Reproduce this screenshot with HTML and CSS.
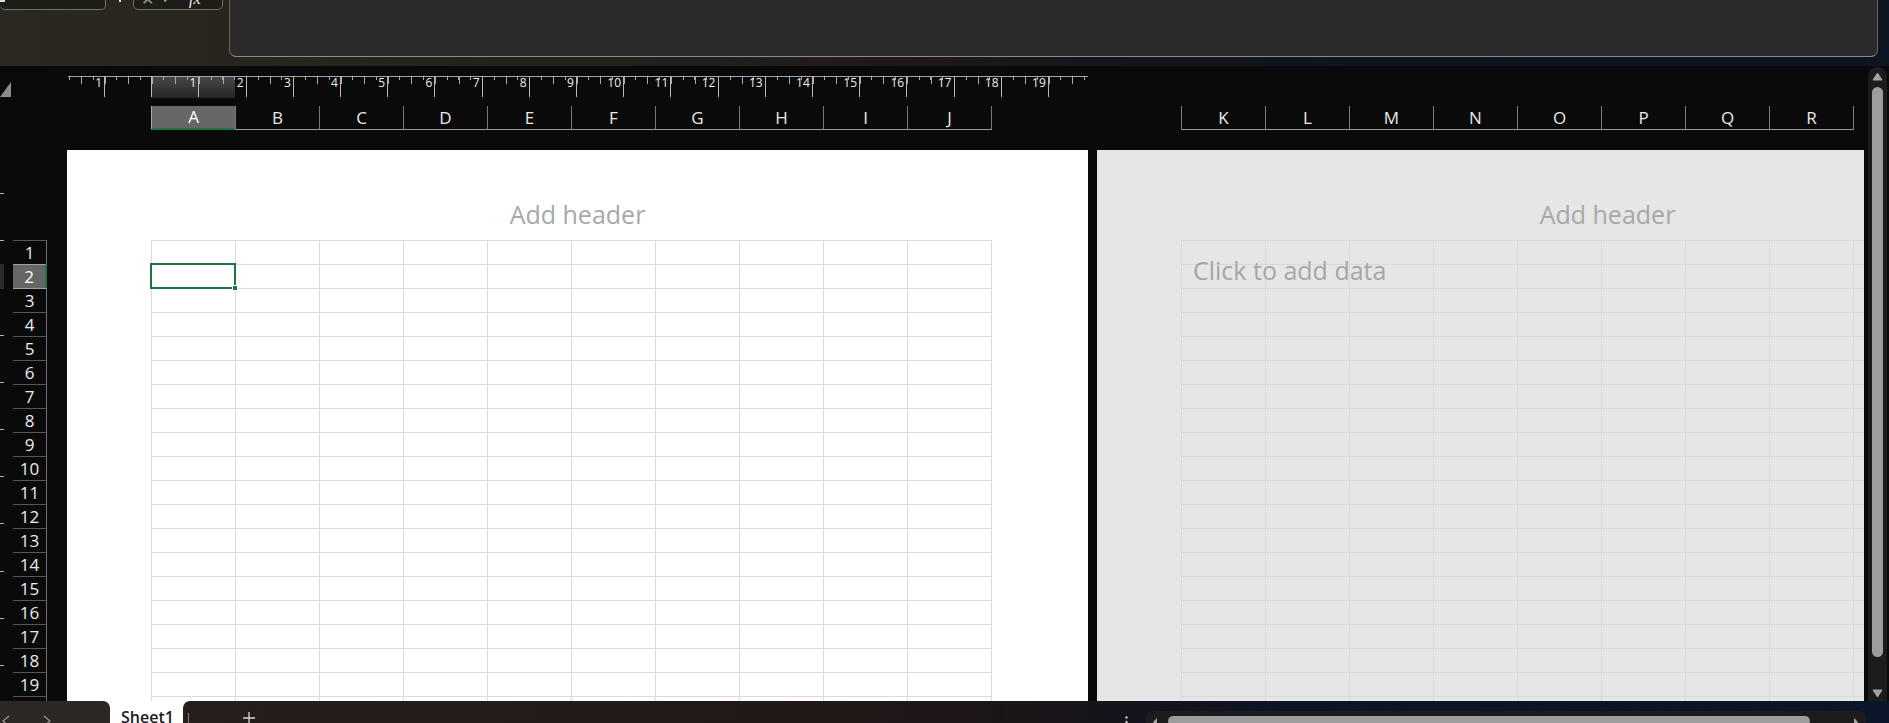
FILE: index.html
```html
<!DOCTYPE html>
<html lang="en">
<head>
<meta charset="utf-8">
<title>Sheet1 - Page Layout</title>
<link rel="stylesheet" href="styles.css">
</head>
<body>
<div class="app">
  <header class="topbar">
    <div class="namebox"><span class="nb-mark"></span></div>
    <div class="vdot"></div>
    <div class="fxbox"><span class="fx-x">✕</span><span class="fx-ok">✓</span><span class="fx-f">fx</span></div>
    <div class="formula"></div>
  </header>

  <main class="sheet">
    <div class="corner">
      <svg width="11" height="15" viewBox="0 0 11 15"><polygon points="0,15 11,0 11,15" fill="#8c8c8c"/></svg>
    </div>

    <div class="ruler">
      <div class="ruler-nums">
        <span>1</span><span></span><span>1</span><span>2</span><span>3</span><span>4</span><span>5</span><span>6</span><span>7</span><span>8</span><span>9</span><span>10</span><span>11</span><span>12</span><span>13</span><span>14</span><span>15</span><span>16</span><span>17</span><span>18</span><span>19</span>
      </div>
    </div>

    <div class="colheads colheads-left">
      <div class="ch sel">A</div><div class="ch">B</div><div class="ch">C</div><div class="ch">D</div><div class="ch">E</div><div class="ch">F</div><div class="ch">G</div><div class="ch">H</div><div class="ch">I</div><div class="ch last">J</div>
    </div>
    <div class="colheads colheads-right">
      <div class="ch">K</div><div class="ch">L</div><div class="ch">M</div><div class="ch">N</div><div class="ch">O</div><div class="ch">P</div><div class="ch">Q</div><div class="ch last">R</div>
    </div>

    <div class="gutter">
      <div class="vruler"><div class="vr-hi"></div></div>
      <div class="rowheads">
        <div class="rh">1</div><div class="rh sel">2</div><div class="rh">3</div><div class="rh">4</div><div class="rh">5</div><div class="rh">6</div><div class="rh">7</div><div class="rh">8</div><div class="rh">9</div><div class="rh">10</div><div class="rh">11</div><div class="rh">12</div><div class="rh">13</div><div class="rh">14</div><div class="rh">15</div><div class="rh">16</div><div class="rh">17</div><div class="rh">18</div><div class="rh">19</div><div class="rh">20</div>
      </div>
    </div>

    <div class="page page-white">
      <div class="page-inner">
        <div class="ph">Add header</div>
        <div class="grid">
          <div class="selbox"><span class="handle"></span></div>
        </div>
      </div>
    </div>

    <div class="page page-gray">
      <div class="page-inner">
        <div class="ph">Add header</div>
        <div class="grid grid-gray">
          <span class="placeholder">Click to add data</span>
        </div>
      </div>
    </div>

    <div class="vscroll">
      <div class="vtrack">
        <svg class="varrow-up" width="11" height="9" viewBox="0 0 11 9"><path d="M5.5 1 L10 8 L1 8 Z" fill="#a3a3a3" stroke="#a3a3a3" stroke-linejoin="round"/></svg>
        <div class="vthumb"></div>
        <svg class="varrow-down" width="11" height="9" viewBox="0 0 11 9"><path d="M1 1 L10 1 L5.5 8 Z" fill="#a3a3a3" stroke="#a3a3a3" stroke-linejoin="round"/></svg>
      </div>
    </div>
  </main>

  <footer class="tabbar">
    <div class="nav">
      <svg class="chev" width="10" height="10" viewBox="0 0 10 10"><polyline points="8,1 2,6 8,11" fill="none" stroke="#9a9a9a" stroke-width="1.2"/></svg>
      <svg class="chev chev-r" width="10" height="10" viewBox="0 0 10 10"><polyline points="2,1 8,6 2,11" fill="none" stroke="#9a9a9a" stroke-width="1.2"/></svg>
    </div>
    <div class="tab">Sheet1</div>
    <div class="rest">
      <div class="sep"></div>
      <svg class="plus" width="12" height="12" viewBox="0 0 12 12"><path d="M6 0 V12 M0 6 H12" stroke="#d6d6d6" stroke-width="1.3"/></svg>
      <div class="tail">
        <svg class="hdots" width="3" height="10" viewBox="0 0 3 10"><circle cx="1.5" cy="1.5" r="1.2" fill="#cfcfcf"/><circle cx="1.5" cy="6" r="1.2" fill="#cfcfcf"/></svg>
        <div class="hscroll">
          <svg class="harrow" width="6" height="9" viewBox="0 0 6 9"><path d="M5 1 L1 5 L5 9 Z" fill="#a3a3a3"/></svg>
          <div class="hthumb"></div>
          <svg class="harrow harrow-r" width="6" height="9" viewBox="0 0 6 9"><path d="M1 1 L5 5 L1 9 Z" fill="#a3a3a3"/></svg>
        </div>
      </div>
    </div>
  </footer>
</div>
</body>
</html>
```

FILE: styles.css
```css
* { box-sizing: border-box; }

html, body {
  margin: 0;
  padding: 0;
  background: #0a0a0a;
  font-family: "Open Sans", "Noto Sans", sans-serif;
}

.app {
  width: 1889px;
  height: 723px;
  overflow: hidden;
  display: flex;
  flex-direction: column;
}

/* ---------- top band ---------- */
.topbar {
  height: 66px;
  flex: none;
  display: flex;
  align-items: flex-start;
  overflow: hidden;
  background: linear-gradient(90deg, #2a2820 0%, #27241b 18%, #231e1a 38%, #1f1718 50%, #121520 60%, #0d1521 75%, #0c1521 100%);
}

.namebox {
  width: 106px;
  height: 20px;
  margin-top: -10px;
  border: 1px solid #6f6f6f;
  border-left: none;
  border-radius: 0 0 5px 5px;
  background: #1e1d18;
}

.nb-mark {
  display: block;
  width: 5px;
  height: 2px;
  margin-top: 9px;
  background: #dcdcdc;
}

.vdot {
  width: 2px;
  height: 2px;
  margin-left: 13px;
  background: #e0e0e0;
}

.fxbox {
  width: 90px;
  height: 20px;
  margin-left: 12px;
  margin-top: -10px;
  border: 1px solid #6f6f6f;
  border-radius: 0 0 5px 5px;
  background: #1e1d18;
  display: flex;
  align-items: flex-start;
  font-size: 16px;
  line-height: 16px;
  color: #9c9c9c;
  overflow: hidden;
}

.fx-x { margin-left: 7px; }
.fx-ok { margin-left: 8px; font-size: 12px; }
.fx-f { margin-left: 17px; font-style: italic; color: #ededed; font-family: "Liberation Serif", serif; }

.formula {
  width: 1649px;
  height: 67px;
  margin-left: 6px;
  margin-top: -10px;
  border: 1px solid #676767;
  border-bottom-color: #8c8c8c;
  border-radius: 0 0 7px 7px;
  background: #2b2b2b;
}

/* ---------- sheet area ---------- */
.sheet {
  flex: none;
  height: 635px;
  display: grid;
  grid-template-columns: 67px 1021px 9px 767px 25px;
  grid-template-rows: 40px 24px 20px 551px;
  background: #0a0a0a;
  overflow: hidden;
}

.corner {
  grid-column: 1;
  grid-row: 1;
  padding-top: 16px;
  line-height: 0;
}

/* horizontal ruler */
.ruler {
  grid-column: 2;
  grid-row: 1;
  margin-top: 10px;
  margin-left: 1px;
  width: 1020px;
  height: 22px;
  overflow: hidden;
  background-image:
    repeating-linear-gradient(90deg, transparent 0 36px, #b9b9b9 36px 37px, transparent 37px 47.2px),
    repeating-linear-gradient(90deg, transparent 0 13px, #a9a9a9 13px 14px, transparent 14px 23.6px),
    repeating-linear-gradient(90deg, transparent 0 1px, #a9a9a9 1px 2px, transparent 2px 11.8px),
    linear-gradient(#a5a5a5, #a5a5a5),
    linear-gradient(#474747, #262626);
  background-size: 100% 21px, 100% 8px, 100% 4px, 100% 1px, 84px 21px;
  background-position: 0 0, 0 0, 0 0, 0 0, 83px 1px;
  background-repeat: no-repeat;
}

.ruler-nums {
  display: flex;
  margin-left: -11.2px;
  font-size: 12px;
  line-height: 14px;
  color: #efefef;
}

.ruler-nums span {
  flex: none;
  width: 47.2px;
  text-align: right;
  padding-right: 2px;
}

/* column headers */
.colheads {
  grid-row: 2;
  display: flex;
  margin-left: 84px;
  height: 24px;
}
.colheads-left { grid-column: 2; }
.colheads-right { grid-column: 4; }

.ch {
  flex: none;
  width: 84px;
  height: 24px;
  border-left: 1px solid #7a7a7a;
  border-bottom: 1px solid #9c9c9c;
  text-align: center;
  font-size: 17px;
  line-height: 23px;
  color: #e9e9e9;
}
.ch.last { width: 85px; border-right: 1px solid #7a7a7a; }
.ch.sel {
  background: #676767;
  border-left-color: #a8a8a8;
  border-bottom: 2px solid #217346;
  line-height: 22px;
  color: #ffffff;
}

/* left gutter with row headers */
.gutter {
  grid-column: 1;
  grid-row: 4;
  display: flex;
  overflow: hidden;
}

.vruler {
  flex: none;
  width: 5px;
  height: 100%;
  background-image: repeating-linear-gradient(180deg, transparent 0 43px, #b4b4b4 43px 44px, transparent 44px 47.2px);
  background-size: 4px 100%;
  background-repeat: no-repeat;
}

.vr-hi {
  width: 4px;
  height: 25px;
  margin-top: 114px;
  background: #2c2c2c;
}

.rowheads {
  flex: none;
  width: 34px;
  margin-left: 8px;
  padding-top: 90px;
}

.rh {
  height: 24px;
  border-top: 1px solid #565656;
  border-right: 1px solid #707070;
  text-align: center;
  font-size: 17px;
  line-height: 23px;
  color: #ececec;
}
.rh.sel {
  background: #666666;
  border-top-color: #a0a0a0;
  border-right: 2px solid #217346;
  color: #ffffff;
}
.rh.sel + .rh { border-top-color: #a0a0a0; }

/* pages */
.page {
  grid-row: 4;
  overflow: hidden;
}
.page-white { grid-column: 2; background: #ffffff; }
.page-gray { grid-column: 4; background: #e6e6e6; }

.page-inner {
  width: 1021px;
  height: 100%;
  padding-top: 47px;
  display: flex;
  flex-direction: column;
}

.ph {
  flex: none;
  height: 34px;
  text-align: center;
  font-size: 25px;
  line-height: 34px;
  color: #a8a8a8;
}

.grid {
  position: relative;
  flex: 1;
  width: 841px;
  margin-top: 9px;
  margin-left: 84px;
  background-image:
    linear-gradient(to right, #dbdbdb 1px, transparent 1px),
    linear-gradient(to bottom, #dbdbdb 1px, transparent 1px);
  background-size: 84px 24px;
}

.grid-gray {
  padding: 13px 0 0 12px;
  background-image:
    linear-gradient(to right, #d9d9d9 1px, transparent 1px),
    linear-gradient(to bottom, #d9d9d9 1px, transparent 1px);
}

.placeholder {
  display: block;
  font-size: 25px;
  line-height: 34px;
  color: #a6a6a6;
}

.selbox {
  position: absolute;
  left: -1px;
  top: 23px;
  width: 86px;
  height: 26px;
  border: 2px solid #217346;
}

.handle {
  position: absolute;
  right: -4px;
  bottom: -4px;
  width: 6px;
  height: 6px;
  background: #217346;
  border: 1px solid #ffffff;
}

/* vertical scrollbar */
.vscroll {
  grid-column: 5;
  grid-row: 1 / 5;
  padding: 1px 2px 0 4px;
}

.vtrack {
  height: 100%;
  background: #1c1c1c;
  border-radius: 9px 9px 0 0;
  display: flex;
  flex-direction: column;
  align-items: center;
}

.varrow-up { margin-top: 5px; flex: none; }
.vthumb {
  flex: none;
  width: 11px;
  height: 570px;
  margin-top: 6px;
  border-radius: 6px;
  background: #9d9d9d;
}
.varrow-down { margin-top: auto; margin-bottom: 3px; flex: none; }

/* ---------- bottom tab bar ---------- */
.tabbar {
  flex: none;
  height: 22px;
  display: flex;
  background: #ffffff;
  overflow: hidden;
}

.nav {
  flex: none;
  width: 110px;
  background: #2c2824;
  border-top-right-radius: 7px;
  display: flex;
  align-items: flex-start;
}

.chev { margin-top: 14px; margin-left: 1px; flex: none; }
.chev-r { margin-left: 31px; }

.tab {
  flex: none;
  width: 73px;
  padding-left: 11px;
  padding-top: 5px;
  font-size: 16px;
  font-weight: 600;
  line-height: 22px;
  color: #1b1b1b;
  background: #ffffff;
  white-space: nowrap;
}

.rest {
  flex: 1;
  display: flex;
  align-items: flex-start;
  border-top-left-radius: 7px;
  background: linear-gradient(90deg, #251e1a 0%, #231b18 25%, #1f1617 45%, #15131c 55%, #0d1425 65%, #0b1529 100%);
}

.sep {
  flex: none;
  width: 1px;
  height: 10px;
  margin-left: 5px;
  margin-top: 12px;
  background: #7a7a7a;
}

.plus { flex: none; margin-left: 54px; margin-top: 11px; }

.tail {
  margin-left: auto;
  display: flex;
  align-items: flex-start;
  padding-right: 23px;
}

.hdots { flex: none; margin-top: 15px; }

.hscroll {
  flex: none;
  width: 720px;
  height: 14px;
  margin-left: 18px;
  margin-top: 10px;
  border-radius: 7px 7px 0 0;
  background: #1c1c1c;
  display: flex;
  align-items: flex-start;
}

.harrow { flex: none; margin-left: 6px; margin-top: 6px; }
.hthumb {
  flex: none;
  width: 642px;
  height: 10px;
  margin-left: 10px;
  margin-top: 5px;
  border-radius: 5px;
  background: #9d9d9d;
}
.harrow-r { margin-left: 43px; }
```
